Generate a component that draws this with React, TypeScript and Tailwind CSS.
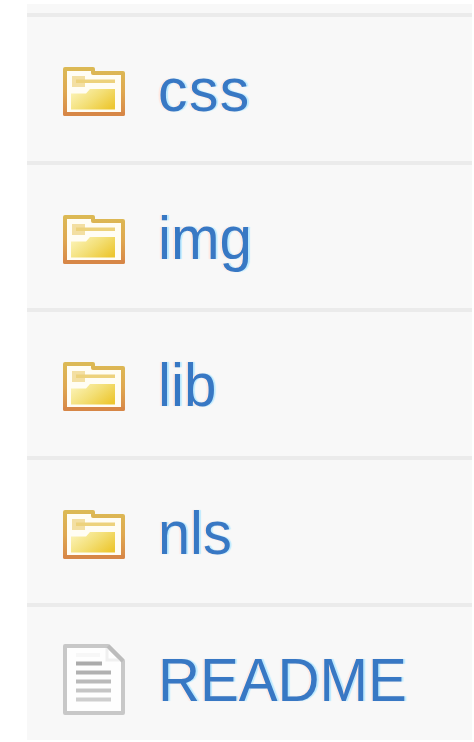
function FolderIcon() {
  return (
    <svg width="64" height="52" viewBox="0 0 64 52" className="block">
      <defs>
        <linearGradient id="edge" x1="0" y1="0" x2="0" y2="1">
          <stop offset="0" stopColor="#dcb955" />
          <stop offset="0.5" stopColor="#dfa850" />
          <stop offset="1" stopColor="#d88a48" />
        </linearGradient>
        <linearGradient id="front" x1="0" y1="0.2" x2="1" y2="0.8">
          <stop offset="0" stopColor="#fbf2b4" />
          <stop offset="0.5" stopColor="#f3df76" />
          <stop offset="1" stopColor="#edc730" />
        </linearGradient>
      </defs>
      <path d="M3 3H31V7H61V48H3Z" fill="#fffdf4" stroke="url(#edge)" strokeWidth="4" strokeLinejoin="round" />
      <path d="M10 10H23V21H10Z" fill="#f3dfa2" />
      <path d="M14 13.5H53V17H14Z" fill="#edd27c" />
      <path d="M9 27.5H24L28 23H53V43.5H9Z" fill="url(#front)" />
      <path d="M3 48H61" stroke="#d78747" strokeWidth="4" strokeLinecap="round" />
    </svg>
  );
}

function FileIcon() {
  return (
    <svg width="64" height="74" viewBox="0 0 64 74" className="block">
      <path d="M3 3H46L61 18V70H3Z" fill="#fefefe" stroke="#c8c8c8" strokeWidth="4" strokeLinejoin="round" />
      <path d="M45 5V17H59" fill="none" stroke="#f0f0f0" strokeWidth="3" />
      <path d="M46 3L61 18" stroke="#bcbcbc" strokeWidth="4" />
      <path d="M14 12H38" stroke="#f7f7f7" strokeWidth="4" />
      <path d="M14 20.5H40" stroke="#ababab" strokeWidth="4" />
      <path d="M14 29.5H49" stroke="#b1b1b1" strokeWidth="4" />
      <path d="M14 38.5H49" stroke="#bababa" strokeWidth="4" />
      <path d="M14 47.5H49" stroke="#c5c5c5" strokeWidth="4" />
      <path d="M14 56.5H49" stroke="#cecece" strokeWidth="4" />
    </svg>
  );
}

const entries = [
  { name: "css", kind: "folder", fit: "scale-x-[0.95] tracking-[1.5px]" },
  { name: "img", kind: "folder", fit: "scale-x-[0.94]" },
  { name: "lib", kind: "folder", fit: "scale-x-[0.94]" },
  { name: "nls", kind: "folder", fit: "scale-x-[0.93]" },
  { name: "README", kind: "file", fit: "scale-x-[0.938]" },
];

export default function App() {
  return (
    <div className="h-[742px] w-[474px] overflow-hidden bg-white pl-[27px] pt-1">
      <div className="h-[736px] w-[445px] overflow-hidden bg-[#f8f8f8] pt-[9px]">
        {entries.map((entry) => (
          <div key={entry.name} className="flex h-[147.5px] items-start border-t-4 border-[#ebebeb] pl-[35px]">
            <div className={entry.kind === "folder" ? "mt-[49px] w-16 shrink-0" : "mt-[36px] w-16 shrink-0"}>
              {entry.kind === "folder" ? <FolderIcon /> : <FileIcon />}
            </div>
            <a
              className={`ml-[32px] mt-[33px] block origin-left whitespace-nowrap font-['Liberation_Sans',Arial,sans-serif] text-[62px] leading-[80px] text-[#3878c4] [text-shadow:-2px_0_1px_#ffe9e2,2px_0_1px_#bceaff] ${entry.fit}`}
            >
              {entry.name}
            </a>
          </div>
        ))}
      </div>
    </div>
  );
}
